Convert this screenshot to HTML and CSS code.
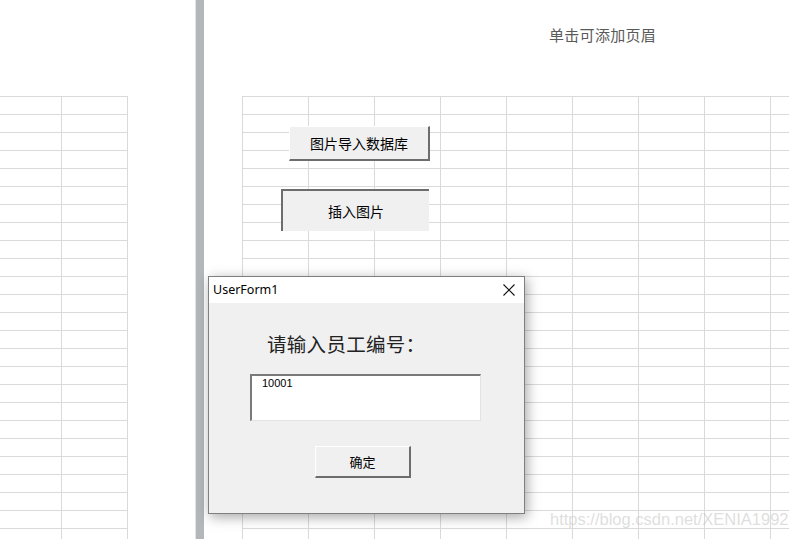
FILE: index.html
```html
<!DOCTYPE html>
<html lang="zh-CN">
<head>
<meta charset="utf-8">
<title>UserForm1</title>
<link rel="stylesheet" href="styles.css">
</head>
<body>
<div class="app">
  <section class="page page-left">
    <div class="page-head"></div>
    <div class="sheet sheet-left"></div>
  </section>
  <div class="divider"></div>
  <section class="page page-right">
    <div class="page-head">
      <span class="header-hint">单击可添加页眉</span>
    </div>
    <div class="sheet sheet-right">
      <button class="sheet-btn btn-import">图片导入数据库</button>
      <button class="sheet-btn btn-insert">插入图片</button>
    </div>
  </section>

  <div class="dialog">
    <div class="dialog-title">
      <span class="dialog-name">UserForm1</span>
      <svg class="dialog-close" width="12" height="12" viewBox="0 0 12 12">
        <path d="M0.5 0.5 L11.5 11.5 M11.5 0.5 L0.5 11.5" stroke="#111" stroke-width="1.1" fill="none"/>
      </svg>
    </div>
    <div class="dialog-body">
      <div class="prompt">请输入员工编号：</div>
      <div class="textbox">10001</div>
      <button class="ok-btn">确定</button>
    </div>
  </div>

  <div class="watermark">https://blog.csdn.net/XENIA1992</div>
</div>
</body>
</html>
```
FILE: styles.css
```css
html, body {
  margin: 0;
  padding: 0;
  background: #fff;
}
.app {
  position: relative;
  width: 789px;
  height: 539px;
  overflow: hidden;
  display: flex;
  font-family: "Noto Sans CJK SC", "Noto Sans", sans-serif;
}
.page {
  display: flex;
  flex-direction: column;
  background: #fff;
}
.page-left {
  width: 195px;
}
.page-right {
  flex: 1;
  padding-left: 38px;
}
.page-head {
  height: 96px;
  flex: none;
  position: relative;
}
.sheet {
  flex: 1;
  position: relative;
  background-image:
    linear-gradient(to bottom, #dadada 0, #dadada 1px, transparent 1px),
    linear-gradient(to right, #dadada 0, #dadada 1px, transparent 1px);
  background-size: 66px 18px;
}
.sheet-left {
  width: 128px;
  background-image:
    linear-gradient(to bottom, #dadada 0, #dadada 1px, transparent 1px),
    linear-gradient(to right, transparent 0, transparent 65px, #dadada 65px);
  background-position: 0 0, -4px 0;
}
.divider {
  width: 8px;
  flex: none;
  background: #b4b7ba;
  border-left: 1px solid #e2e3e4;
}
.header-hint {
  position: absolute;
  left: 307px;
  top: 24px;
  font-size: 15px;
  color: #5a5a5a;
  letter-spacing: 0.3px;
}
.sheet-btn {
  position: absolute;
  margin: 0;
  padding: 0;
  background: #f0f0f0;
  font-family: "Noto Sans CJK SC", sans-serif;
  font-size: 14px;
  color: #000;
  border: 0;
}
.btn-import {
  left: 47px;
  top: 30px;
  width: 141px;
  height: 35px;
  border-right: 2px solid #6d6d6d;
  border-bottom: 2px solid #6d6d6d;
  border-top: 1px solid #fff;
  border-left: 1px solid #fff;
}
.btn-insert {
  left: 39px;
  top: 93px;
  width: 148px;
  height: 42px;
  border-top: 2px solid #6d6d6d;
  border-left: 2px solid #6d6d6d;
}
.dialog {
  position: absolute;
  left: 208px;
  top: 276px;
  width: 315px;
  height: 236px;
  border: 1px solid #7f7f7f;
  background: #f0f0f0;
  box-shadow: 2px 3px 12px rgba(0, 0, 0, 0.35);
  display: flex;
  flex-direction: column;
}
.dialog-title {
  height: 26px;
  background: #fff;
  display: flex;
  align-items: center;
  justify-content: space-between;
  padding: 0 9px 0 4px;
  flex: none;
}
.dialog-name {
  font-family: "Noto Sans", sans-serif;
  font-size: 12.5px;
  color: #000;
  line-height: 1;
}
.dialog-body {
  flex: 1;
  display: flex;
  flex-direction: column;
  align-items: flex-start;
  padding: 29px 0 0 41px;
}
.prompt {
  margin-left: 17px;
  font-size: 19.5px;
  line-height: 24px;
  color: #222;
  letter-spacing: 0.3px;
}
.textbox {
  margin-top: 18px;
  box-sizing: border-box;
  width: 231px;
  height: 47px;
  background: #fff;
  border-top: 2px solid #7a7a7a;
  border-left: 2px solid #7a7a7a;
  border-right: 1px solid #e3e3e3;
  border-bottom: 1px solid #e3e3e3;
  padding: 1px 0 0 10px;
  font-family: "Liberation Sans", sans-serif;
  font-size: 11px;
  color: #000;
}
.ok-btn {
  margin: 25px 0 0 65px;
  padding: 0;
  box-sizing: border-box;
  width: 96px;
  height: 32px;
  background: #f0f0f0;
  border-top: 1px solid #fff;
  border-left: 1px solid #fff;
  border-right: 2px solid #6d6d6d;
  border-bottom: 2px solid #6d6d6d;
  font-family: "Noto Sans CJK SC", sans-serif;
  font-size: 13px;
  color: #000;
}
.watermark {
  position: absolute;
  left: 550px;
  top: 510px;
  font-family: "Liberation Sans", sans-serif;
  font-size: 16.5px;
  color: rgba(190, 190, 190, 0.5);
  white-space: nowrap;
}
```
